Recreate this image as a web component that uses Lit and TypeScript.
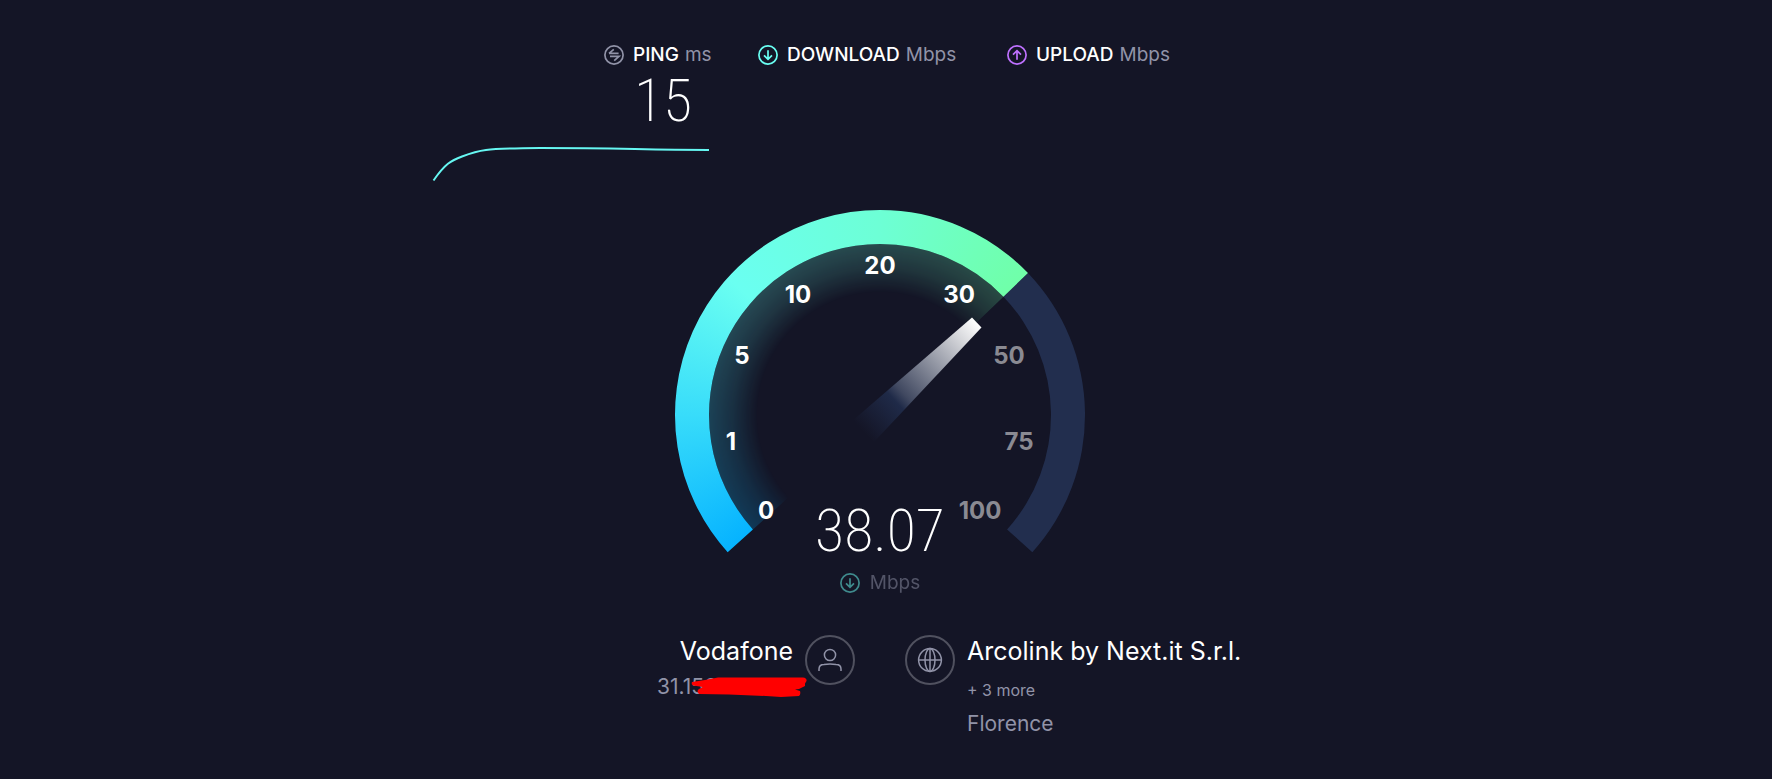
import { LitElement, html, svg, css } from "lit";
import { customElement, property } from "lit/decorators.js";

type IconName = "ping" | "download" | "upload" | "user" | "globe";

const ICONS = {
  ping: svg`<circle cx="10" cy="10" r="9.1" />
    <path d="M5 8.4H14.6M5 8.4L9.8 4.4M6 11.4H15L10.2 15.6M6.6 9.9" />`,
  download: svg`<circle cx="10" cy="10" r="9.1" />
    <path d="M10 5.2V14.2M6 10.4L10 14.4L14 10.4" />`,
  upload: svg`<circle cx="10" cy="10" r="9.1" />
    <path d="M10 14.8V5.8M6 9.6L10 5.6L14 9.6" />`,
  user: svg`<circle cx="25" cy="20" r="5.6" />
    <path d="M14 36V34Q14 29.4 19 29.4Q25 28.6 31 29.4Q36 29.4 36 34V36" />`,
  globe: svg`<circle cx="25" cy="25" r="11.4" />
    <ellipse cx="25" cy="25" rx="5" ry="11.4" />
    <path d="M13.6 25H36.4M25 13.6V36.4" />`,
};

@customElement("st-icon")
class StIcon extends LitElement {
  @property() name: IconName = "ping";

  static styles = css`
    :host {
      display: block;
      width: 20px;
      height: 20px;
      flex: none;
    }
    svg {
      display: block;
      width: 100%;
      height: 100%;
      fill: none;
      stroke: currentColor;
      stroke-width: 1.7;
    }
  `;

  render() {
    return html`<svg viewBox="0 0 20 20" aria-hidden="true">${ICONS[this.name]}</svg>`;
  }
}

@customElement("st-badge")
class StBadge extends LitElement {
  @property() name: IconName = "user";

  static styles = css`
    :host {
      display: block;
      width: 50px;
      height: 50px;
      flex: none;
      color: #9193a8;
    }
    svg {
      display: block;
      fill: none;
      stroke: currentColor;
      stroke-width: 1.5;
    }
    .ring {
      stroke: #50515f;
      stroke-width: 2;
    }
  `;

  render() {
    return html`<svg viewBox="0 0 50 50" width="50" height="50" aria-hidden="true">
      <circle class="ring" cx="25" cy="25" r="24" />
      ${ICONS[this.name]}
    </svg>`;
  }
}

const TICKS = [
  { label: "0", x: 91, y: 300 },
  { label: "1", x: 56, y: 231 },
  { label: "5", x: 67, y: 145 },
  { label: "10", x: 123, y: 84 },
  { label: "20", x: 205, y: 55 },
  { label: "30", x: 284, y: 84 },
  { label: "50", x: 334, y: 145 },
  { label: "75", x: 344, y: 231 },
  { label: "100", x: 305, y: 300 },
];

@customElement("st-gauge")
class StGauge extends LitElement {
  @property({ type: Number }) value = 0;

  static styles = css`
    :host {
      display: grid;
      justify-items: center;
    }
    svg,
    .value {
      grid-area: 1 / 1;
    }
    svg {
      display: block;
      overflow: visible;
    }
    .track {
      fill: #222e4e;
    }
    .fill,
    .glow {
      width: 430px;
      height: 430px;
      background: conic-gradient(
        from 228deg,
        #06b3ff 0deg,
        #38dcfa 42deg,
        #6afff1 84deg,
        #6dffd5 132deg,
        #70ffa9 178deg,
        #70ffa9 270deg,
        #06b3ff 300deg
      );
    }
    .glow {
      opacity: 0.23;
      -webkit-mask-image: radial-gradient(circle at center, transparent 122px, #0009 148px, #000 172px);
      mask-image: radial-gradient(circle at center, transparent 122px, #0009 148px, #000 172px);
    }
    text {
      font: 700 24px Inter, sans-serif;
      fill: #fff;
      text-anchor: middle;
    }
    .ahead {
      fill: #8a8a92;
    }
    .value {
      align-self: end;
      font: 200 60px/44px "Roboto Condensed", Roboto, sans-serif;
      color: #fff;
    }
  `;

  render() {
    return html`
      <svg viewBox="0 0 410 343" width="410" height="343" role="img" aria-label="Download speed gauge">
        <defs>
          <clipPath id="arc">
            <path d="M52.65 342.17A205 205 0 0 1 205 0A205 205 0 0 1 352.96 63.11L328.42 86.64A171 171 0 0 0 205 34A171 171 0 0 0 77.92 319.42Z" />
          </clipPath>
          <clipPath id="sector">
            <path d="M205 205L77.92 319.42A171 171 0 0 1 205 34A171 171 0 0 1 328.42 86.64Z" />
          </clipPath>
          <linearGradient id="needle" gradientUnits="userSpaceOnUse" x1="302" y1="112" x2="186" y2="219">
            <stop offset="0" stop-color="#fff" />
            <stop offset="0.15" stop-color="#d6d7db" />
            <stop offset="0.65" stop-color="#404860" />
            <stop offset="0.72" stop-color="#1f2a48" />
            <stop offset="1" stop-color="#1f2a48" stop-opacity="0" />
          </linearGradient>
        </defs>
        <path class="track" d="M352.96 63.11A205 205 0 0 1 357.35 342.17L332.08 319.42A171 171 0 0 0 328.42 86.64Z" />
        <g clip-path="url(#sector)">
          <foreignObject x="-10" y="-10" width="430" height="430"><div class="glow"></div></foreignObject>
        </g>
        <g clip-path="url(#arc)">
          <foreignObject x="-10" y="-10" width="430" height="430"><div class="fill"></div></foreignObject>
        </g>
        <path fill="url(#needle)" d="M297 107.5L306.5 117.5L199 232L176 212Z" />
        ${TICKS.map(
          (t) => svg`<text class=${Number(t.label) > this.value ? "ahead" : ""} x=${t.x} y=${t.y + 9}>${t.label}</text>`
        )}
      </svg>
      <div class="value">${this.value.toFixed(2)}</div>
    `;
  }
}

@customElement("app-root")
class AppRoot extends LitElement {
  static styles = css`
    :host {
      display: block;
      box-sizing: border-box;
      min-height: 100vh;
      padding: 43px 12px 40px 0;
      background: #141526;
      color: #9193a8;
      font: 400 19px/24px Inter, sans-serif;
    }
    .metrics {
      display: grid;
      grid-template-columns: 154px 249px 165px;
      justify-content: center;
      padding-left: 16px;
      white-space: nowrap;
    }
    .label {
      display: flex;
      align-items: center;
      gap: 9px;
    }
    .label b {
      font-weight: 500;
      color: #fff;
    }
    .pair {
      display: flex;
      gap: 6px;
      color: #9193a8;
    }
    .ping-value {
      padding: 12px 0 0 30px;
      font: 200 60px/44px "Roboto Condensed", Roboto, sans-serif;
      color: #fff;
    }
    .down {
      color: #6afff3;
    }
    .up {
      color: #bf71ff;
    }
    .trend {
      max-width: 894px;
      margin: 0 auto;
      padding: 24px 0 28px;
    }
    .trend svg {
      display: block;
      fill: none;
      stroke: #66f7f2;
      stroke-width: 2;
      overflow: visible;
    }
    .live {
      display: flex;
      justify-content: center;
      align-items: center;
      gap: 10px;
      padding-top: 18px;
      opacity: 0.5;
    }
    .live st-icon {
      color: #6afff3;
    }
    .hosts {
      display: grid;
      grid-template-columns: 1fr 1fr;
      gap: 50px;
      padding-top: 40px;
    }
    .host {
      display: flex;
      gap: 12px;
    }
    .client {
      justify-content: flex-end;
    }
    .client .details {
      display: flex;
      flex-direction: column;
      align-items: flex-end;
    }
    .name {
      padding-top: 1px;
      font-size: 25px;
      line-height: 30px;
      color: #fff;
    }
    .address {
      display: grid;
      align-items: center;
      width: 136px;
      margin-top: 6px;
      font-size: 21px;
      line-height: 30px;
    }
    .address > * {
      grid-area: 1 / 1;
    }
    .address svg {
      margin-left: 34px;
      z-index: 1;
      overflow: visible;
    }
    .more {
      display: block;
      margin-top: 12px;
      font-size: 16px;
      line-height: 24px;
      color: inherit;
      text-decoration: none;
    }
    .city {
      margin-top: 8px;
      font-size: 21px;
      line-height: 28px;
    }
  `;

  render() {
    return html`
      <div class="metrics">
        <div>
          <div class="label">
            <st-icon name="ping"></st-icon>
            <div class="pair"><b>PING</b><span>ms</span></div>
          </div>
          <div class="ping-value">15</div>
        </div>
        <div>
          <div class="label">
            <st-icon class="down" name="download"></st-icon>
            <div class="pair"><b>DOWNLOAD</b><span>Mbps</span></div>
          </div>
        </div>
        <div>
          <div class="label">
            <st-icon class="up" name="upload"></st-icon>
            <div class="pair"><b>UPLOAD</b><span>Mbps</span></div>
          </div>
        </div>
      </div>
      <div class="trend">
        <svg viewBox="0 0 276 35" width="276" height="35" aria-hidden="true">
          <path d="M0.5 33.5C12 17 18 13.5 29 9.5C46 3 50 1.5 107 1C190 1 210 3 276 3" />
        </svg>
      </div>
      <st-gauge value="38.07"></st-gauge>
      <div class="live">
        <st-icon name="download"></st-icon>
        <span>Mbps</span>
      </div>
      <div class="hosts">
        <div class="host client">
          <div class="details">
            <div class="name">Vodafone</div>
            <div class="address">
              <span>31.156.</span>
              <svg viewBox="0 0 117 22" width="117" height="22" aria-hidden="true">
                <path
                  fill="#f00"
                  d="M1 6L14 4L27 1.5L112 1.5Q116 2 115.500 5L114 7.500L114 10L108 13L104 13.500L109 15Q110 18 108 20L90 21L75 20L38 18.500L8 18Q5 15 8 13L12 11L2 9.500Q0 8 1 6Z"
                />
              </svg>
            </div>
          </div>
          <st-badge name="user"></st-badge>
        </div>
        <div class="host">
          <st-badge name="globe"></st-badge>
          <div class="details">
            <div class="name">Arcolink by Next.it S.r.l.</div>
            <a class="more" href="#servers">+ 3 more</a>
            <div class="city">Florence</div>
          </div>
        </div>
      </div>
    `;
  }
}
